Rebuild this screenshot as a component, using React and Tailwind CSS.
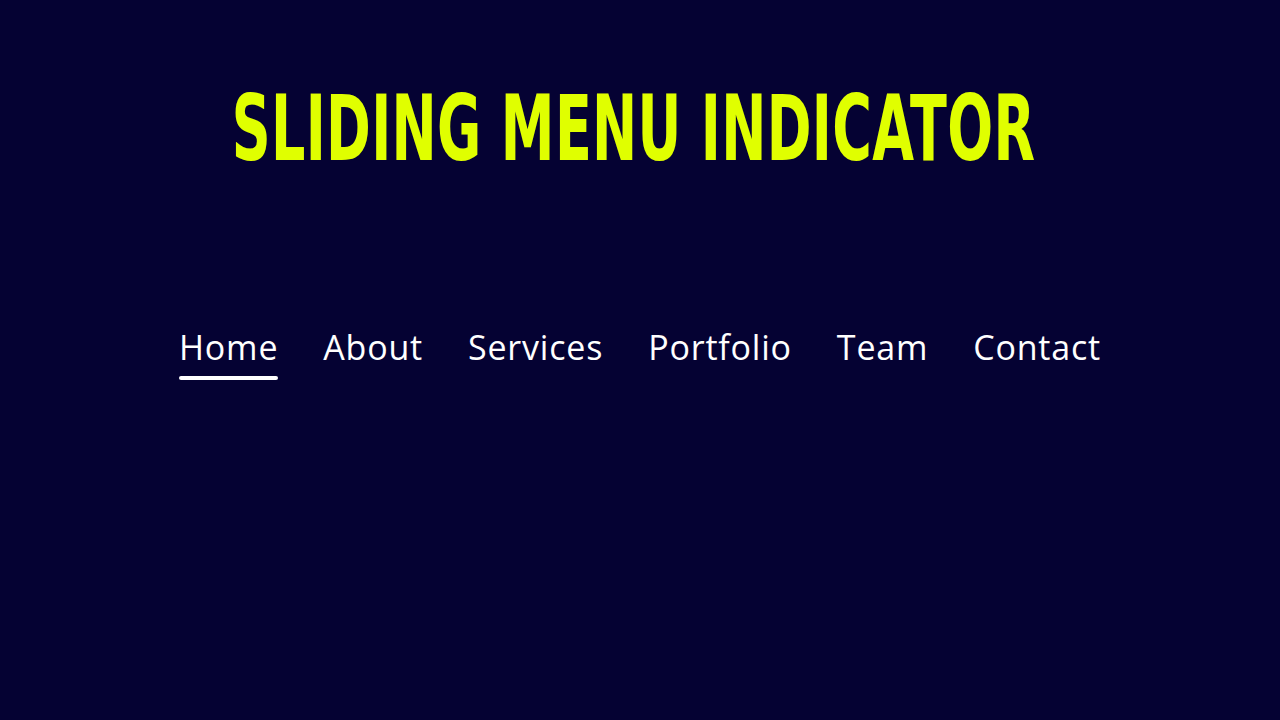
import React, { useState } from "react";

const items = ["Home", "About", "Services", "Portfolio", "Team", "Contact"];

export default function App() {
  const [active, setActive] = useState(0);

  return (
    <div className="w-full h-[720px] bg-[#050233] flex flex-col items-center overflow-hidden">
      {/* Title */}
      <h1 className="mt-[79px] mr-[13px] h-[100px] text-[#e0ff00] text-[90px] leading-[100px] font-bold whitespace-nowrap scale-x-[0.6] tracking-[0.5px] font-['DejaVu_Sans',sans-serif]">
        SLIDING MENU INDICATOR
      </h1>

      {/* Menu */}
      <nav className="mt-[148px] flex items-start gap-[45px] font-['Open_Sans',sans-serif]">
        {items.map(function (item, i) {
          return (
            <button
              key={item}
              onClick={function () { setActive(i); }}
              className="flex flex-col items-stretch text-white text-[34px] leading-[40px] tracking-[0.8px]"
            >
              <span>{item}</span>
              <span className={(i === active ? "bg-white" : "bg-transparent") + " mt-[9px] h-[4px] rounded-full"} />
            </button>
          );
        })}
      </nav>
    </div>
  );
}
